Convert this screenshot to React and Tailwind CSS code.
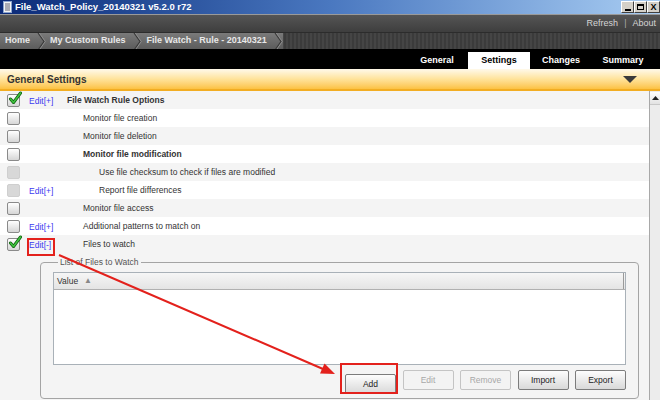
import React from "react";

const rows = [
  { checked: true, edit: "Edit[+]", label: "File Watch Rule Options", bold: true, level: 0 },
  { label: "Monitor file creation", level: 1 },
  { label: "Monitor file deletion", level: 1 },
  { label: "Monitor file modification", bold: true, level: 1 },
  { disabled: true, label: "Use file checksum to check if files are modified", level: 2 },
  { disabled: true, edit: "Edit[+]", label: "Report file differences", level: 2 },
  { label: "Monitor file access", level: 1 },
  { edit: "Edit[+]", label: "Additional patterns to match on", level: 1 },
  { checked: true, edit: "Edit[-]", label: "Files to watch", level: 1, boxed: true },
];

const indent = ["ml-0", "ml-[16px]", "ml-[32px]"];

const Checkbox = ({ checked, disabled }) => (
  <div className="relative w-[13px] h-[13px]">
    <div
      className={
        disabled
          ? "w-[13px] h-[13px] rounded-[2px] border border-[#cfcfcf] bg-[#d8d8d8]"
          : "w-[13px] h-[13px] rounded-[2px] border border-[#8a8a8a] bg-linear-to-b from-white to-[#d6d6d6]"
      }
    />
    {checked && (
      <svg className="absolute left-[1px] top-[-3px]" width="15" height="15" viewBox="0 0 15 15">
        <path d="M2.5 8 L5.5 11.5 L12.5 2" fill="none" stroke="#0d5f0d" strokeWidth="3" strokeLinecap="round" strokeLinejoin="round" />
        <path d="M2.5 8 L5.5 11.5 L12.5 2" fill="none" stroke="#3fc23f" strokeWidth="1.6" strokeLinecap="round" strokeLinejoin="round" />
      </svg>
    )}
  </div>
);

const Chevron = () => (
  <svg width="9" height="17" viewBox="0 0 9 17" className="shrink-0">
    <polyline points="1,0 7,8.5 1,17" fill="none" stroke="#3a3a3a" strokeWidth="1.2" />
    <polyline points="2.3,0 8.3,8.5 2.3,17" fill="none" stroke="#8c8c8c" strokeWidth="1" />
  </svg>
);

const WinButton = ({ children }) => (
  <div className="w-[13px] h-[12px] bg-[#d4d0c8] border border-t-white border-l-white border-r-[#404040] border-b-[#404040] flex items-center justify-center text-[9px] font-bold leading-none text-black">
    {children}
  </div>
);

const Button = ({ children, disabled }) => (
  <button
    className={
      disabled
        ? "w-[51px] h-[20px] rounded-[2px] border border-[#c4c4c4] bg-[#f3f3f3] text-[#a8a8a8] text-[8.5px]"
        : "w-[51px] h-[20px] rounded-[2px] border border-[#7c7c7c] bg-linear-to-b from-[#fdfdfd] to-[#d9d9d9] text-[#222] text-[8.5px]"
    }
  >
    {children}
  </button>
);

export default function App() {
  return (
    <div
      className="relative w-[660px] h-[400px] overflow-hidden flex flex-col bg-[#f4f4f4]"
      style={{ fontFamily: "'Liberation Sans', Arial, sans-serif" }}
    >
      {/* title bar */}
      <div className="h-[14px] flex items-center bg-linear-to-r from-[#0c2a78] via-[#4a78c0] to-[#a9cdf2]">
        <svg width="12" height="13" viewBox="0 0 12 13" className="ml-[2px]">
          <rect x="1.5" y="0.5" width="8" height="11" fill="#f4f4f4" stroke="#8ea6d0" />
          <line x1="3" y1="3" x2="8" y2="3" stroke="#667" />
          <line x1="3" y1="5" x2="8" y2="5" stroke="#667" />
          <line x1="3" y1="7" x2="8" y2="7" stroke="#667" />
          <line x1="3" y1="9" x2="8" y2="9" stroke="#667" />
        </svg>
        <span className="ml-[1px] text-white font-bold text-[9.5px] leading-none">
          File_Watch_Policy_20140321 v5.2.0 r72
        </span>
        <div className="ml-auto flex items-center">
          <WinButton>
            <span className="mt-[5px] block w-[6px] h-[2px] bg-black" />
          </WinButton>
          <WinButton>
            <span className="block w-[7px] h-[6px] border border-black border-t-2" />
          </WinButton>
          <WinButton>X</WinButton>
        </div>
      </div>

      {/* top bar */}
      <div className="h-[18px] flex items-center justify-end pr-[4px] border-t border-[#9a9a9a] bg-linear-to-b from-[#555] to-[#3e3e3e] text-[#d4d4d4] text-[9px]">
        <span>Refresh</span>
        <span className="mx-[6px] text-[#aaa]">|</span>
        <span>About</span>
      </div>

      {/* breadcrumbs */}
      <div className="h-[17px] flex border-t border-[#2c2c2c] bg-[repeating-linear-gradient(90deg,#3b3b3b_0px,#3b3b3b_2px,#454545_2px,#454545_4px)]">
        <div className="flex items-center bg-linear-to-b from-[#7a7a7a] to-[#5c5c5c] text-[#e8e8e8] text-[9px] font-bold">
          <span className="ml-[5px]">Home</span>
          <span className="ml-[7px]"><Chevron /></span>
          <span className="ml-[4px]">My Custom Rules</span>
          <span className="ml-[7px]"><Chevron /></span>
          <span className="ml-[5px]">File Watch - Rule - 20140321</span>
          <span className="ml-[7px]"><Chevron /></span>
        </div>
      </div>

      {/* tabs */}
      <div className="h-[20px] bg-black flex justify-end items-end pr-[6px]">
        {["General", "Settings", "Changes", "Summary"].map((t) => (
          <div
            key={t}
            className={
              t === "Settings"
                ? "w-[62px] h-[17px] bg-white text-black font-bold text-[9px] flex items-center justify-center"
                : "w-[62px] h-[17px] text-white font-bold text-[9px] flex items-center justify-center"
            }
          >
            {t}
          </div>
        ))}
      </div>

      {/* section header */}
      <div className="h-[22px] flex items-center justify-between px-[7px] border-b-2 border-[#f2ad22] bg-linear-to-b from-[#fff9ea] via-[#ffe39a] to-[#fcc240]">
        <span className="font-bold text-[10px] text-[#333]">General Settings</span>
        <svg width="14" height="8" viewBox="0 0 14 8" className="mr-[16px] mt-[2px]">
          <polygon points="0,0 14,0 7,7" fill="#3a3a3a" />
        </svg>
      </div>

      {/* body */}
      <div className="flex-1 flex min-h-0">
        <div className="flex-1 flex flex-col">
          {rows.map((r, i) => (
            <div
              key={i}
              className={
                "h-[18px] flex items-center pt-[1px] text-[8.5px] text-[#333] " +
                (i % 2 === 0 ? "bg-[#f4f4f4]" : "bg-white")
              }
            >
              <div className="w-[27px] pl-[7px]">
                <Checkbox checked={r.checked} disabled={r.disabled} />
              </div>
              <div className="w-[40px] pl-[2px]">
                {r.edit && (
                  <span className="relative block leading-[10px] text-[#3b3bf0]">
                    {r.edit}
                    {r.boxed && (
                      <span className="absolute left-[-2px] top-[-2px] w-[28px] h-[18px] border-2 border-[#e3211c]" />
                    )}
                  </span>
                )}
              </div>
              <span className={(r.bold ? "font-bold " : "") + indent[r.level]}>{r.label}</span>
            </div>
          ))}

          <fieldset className="mt-[4px] ml-[40px] mr-[10px] border border-[#a4a4a4] rounded-[4px] px-[12px] pt-[5px] pb-[4px]">
            <legend className="ml-[5px] px-[2px] text-[8.5px] leading-[10px] text-[#555]">List of Files to Watch</legend>
            <div className="h-[93px] border border-[#a9b1b8] bg-white flex flex-col">
              <div className="h-[17px] flex items-center border-b border-[#b0b0b0] bg-linear-to-b from-[#f6f6f6] to-[#e4e4e4] text-[8.5px] text-[#333]">
                <span className="ml-[3px]">Value</span>
                <span className="ml-[6px] text-[8px] text-[#888]">▲</span>
                <span className="ml-auto w-[1px] h-full bg-[#9a9a9a] mr-[1px]" />
              </div>
            </div>
            <div className="mt-[5px] flex justify-end gap-[6.5px]">
              <div className="relative">
                <Button>Add</Button>
                <span className="absolute left-[-5px] top-[-7px] w-[58px] h-[31px] border-2 border-[#e3211c]" />
              </div>
              <Button disabled>Edit</Button>
              <Button disabled>Remove</Button>
              <Button>Import</Button>
              <Button>Export</Button>
            </div>
          </fieldset>
        </div>

        {/* scrollbar */}
        <div className="w-[11px] border-l border-[#a8a8a8] bg-[#ececec] flex flex-col">
          <div className="h-[13px] mt-[1px] border-b border-[#c8c8c8] bg-linear-to-b from-white to-[#e2e2e2] flex items-center justify-center">
            <svg width="7" height="4" viewBox="0 0 7 4">
              <polygon points="0,4 7,4 3.5,0" fill="#222" />
            </svg>
          </div>
        </div>
      </div>

      {/* annotation arrow */}
      <svg className="absolute inset-0 pointer-events-none" width="660" height="400" viewBox="0 0 660 400">
        <line x1="59" y1="255" x2="323" y2="369" stroke="#e3211c" strokeWidth="2" />
        <polygon points="335,374 324.5,363.5 320,373.5" fill="#e3211c" />
      </svg>
    </div>
  );
}
